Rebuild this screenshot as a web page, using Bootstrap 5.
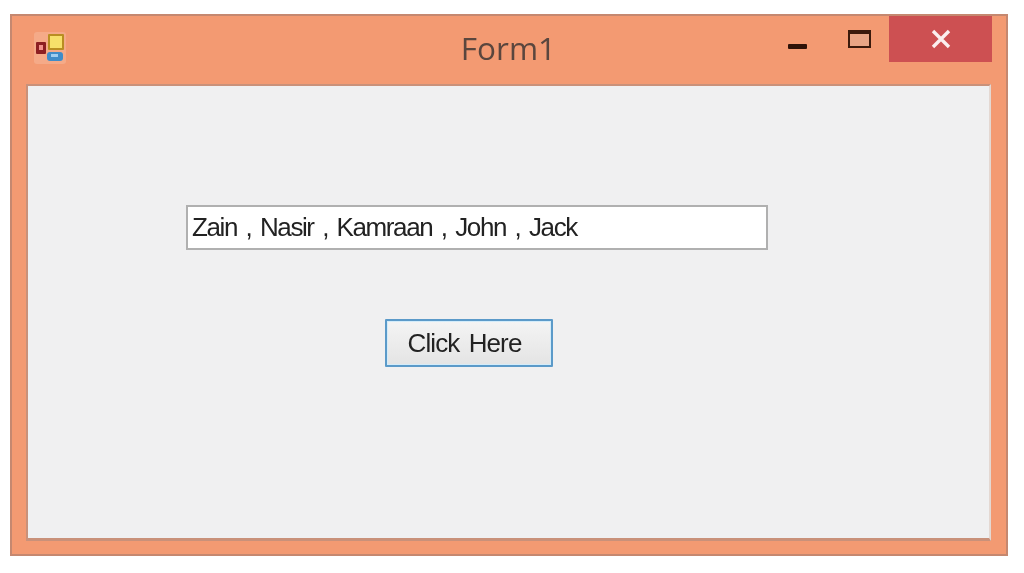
<!DOCTYPE html>
<html lang="en">
<head>
<meta charset="utf-8">
<title>Form1</title>
<link href="https://cdn.jsdelivr.net/npm/bootstrap@5.3.0/dist/css/bootstrap.min.css" rel="stylesheet">
<style>
html, body { height: 100%; }
body { background: #fff; padding: 14px 16px 17px 10px; overflow: hidden; }
.win-frame { width: 998px; height: 542px; background: #f39a72; border: 2px solid #c58870; padding: 0 15px 15px 14px; filter: blur(.6px); }
.win-title { height: 68px; position: relative; }
.win-icon { margin-left: 8px; margin-top: 16px; width: 32px; height: 32px; }
.win-name { position: absolute; left: 0; right: 0; top: 10px; text-align: center; font: 31.5px/44px "Open Sans", sans-serif; color: #5a463e; }
.win-btns { height: 46px; margin-right: -1px; }
.win-min { width: 19px; height: 5px; background: #2e1208; margin-right: 41px; margin-top: 28px; border-radius: 1px; }
.win-max { width: 23px; height: 18px; border: 2px solid #3b1a0c; border-top-width: 4px; margin-right: 18px; margin-top: 14px; background: #e9a585; }
.win-close { width: 103px; height: 46px; background: #cd5052; border: 0; padding: 0; }
.win-client { height: 457px; background: #f0f0f1; border: 2px solid #c9917a; border-bottom-width: 3px; border-right-color: #e4d8d2; padding: 119px 0 0 158px; }
.name-box { width: 582px; height: 45px; background: #fff; border: 2px solid #b0b0b0; padding: 0 4px; font: 26px/39px "Liberation Sans", sans-serif; color: #222; white-space: nowrap; border-radius: 0; letter-spacing: -1.4px; word-spacing: 2.75px; }
.name-box:focus { box-shadow: none; border-color: #b0b0b0; color: #222; }
.click-btn { display: block; width: 168px; height: 48px; margin: 69px 0 0 199px; padding: 0 9px 0 0; border: 2px solid #5b9ac9; background: linear-gradient(#f4f4f4, #e4e4e4); border-radius: 1px; box-shadow: inset 0 0 0 1px #d3ecfa; font: 26px/42px "Liberation Sans", sans-serif; color: #222; letter-spacing: -.9px; word-spacing: 3px; }
</style>
</head>
<body>
<div class="win-frame">
  <div class="win-title d-flex justify-content-between align-items-start">
    <svg class="win-icon" viewBox="0 0 32 32" aria-hidden="true">
      <rect x="0" y="0" width="32" height="32" rx="3" fill="#f6b89b" fill-opacity=".55"/>
      <rect x="2" y="10" width="10" height="12" rx="1" fill="#8d1f22"/>
      <rect x="5" y="13" width="4" height="5" fill="#f1908a"/>
      <rect x="14" y="2" width="16" height="16" rx="1" fill="#b98e22"/>
      <rect x="16" y="4" width="12" height="12" fill="#f6e06a"/>
      <rect x="13" y="20" width="16" height="9" rx="3" fill="#3f8cc8"/>
      <rect x="17" y="22" width="7" height="3" fill="#9fcdef"/>
    </svg>
    <div class="win-name">Form1</div>
    <div class="win-btns d-flex align-items-start">
      <div class="win-min"></div>
      <div class="win-max"></div>
      <button class="win-close d-flex align-items-center justify-content-center" type="button" aria-label="Close">
        <svg width="20" height="20" viewBox="0 0 20 20" aria-hidden="true"><path d="M2 2 18 18M18 2 2 18" stroke="#fbeeee" stroke-width="3.4" fill="none"/></svg>
      </button>
    </div>
  </div>
  <div class="win-client">
    <input class="form-control name-box" type="text" value="Zain , Nasir , Kamraan , John , Jack">
    <button class="btn click-btn" type="button">Click Here</button>
  </div>
</div>
<script src="https://cdn.jsdelivr.net/npm/bootstrap@5.3.0/dist/js/bootstrap.bundle.min.js"></script>
</body>
</html>
